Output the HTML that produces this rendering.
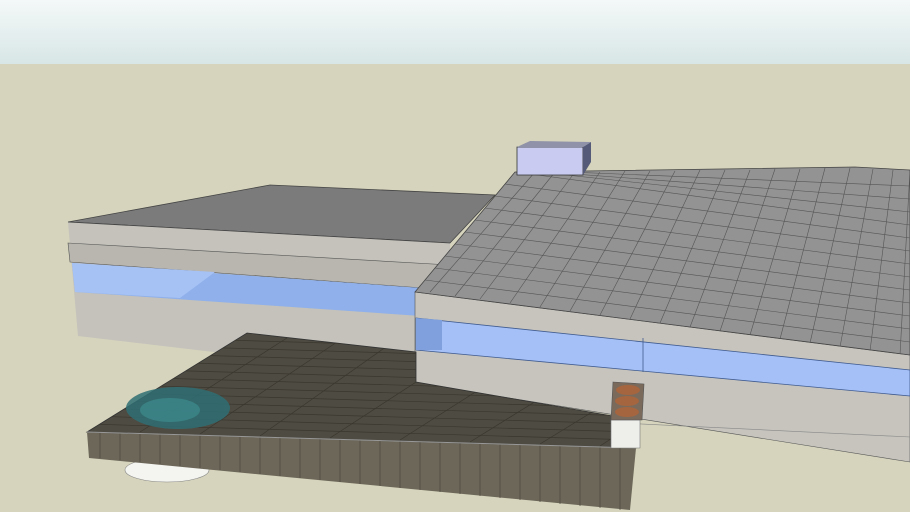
<!DOCTYPE html>
<html><head><meta charset="utf-8"><style>html,body{margin:0;padding:0;width:910px;height:512px;overflow:hidden}svg{display:block}</style></head>
<body>
<svg width="910" height="512" viewBox="0 0 910 512" xmlns="http://www.w3.org/2000/svg">
<defs>
<linearGradient id="sky" x1="0" y1="0" x2="0" y2="1"><stop offset="0" stop-color="#f4f8f8"/><stop offset="1" stop-color="#d8e6e6"/></linearGradient>
<clipPath id="rroof"><polygon points="415,292 515,172 855,167 910,170 910,355"/></clipPath>
<clipPath id="deck"><polygon points="87,432 247,333 416,352 416,382 636,420 636,448"/></clipPath>
</defs>
<rect width="910" height="64" fill="url(#sky)"/>
<rect y="64" width="910" height="448" fill="#d6d4bc"/>
<!-- left building -->
<polygon points="68,222 270,185 495,195 450,243" fill="#7b7b7b" stroke="#444" stroke-width="0.8"/>
<polygon points="68,222 450,243 450,380 78,336" fill="#c4c2bb"/>
<polygon points="68,243 450,265 450,290 70,262" fill="#b8b6ae" stroke="#555" stroke-width="0.6"/>
<polygon points="72,263 450,290 450,318 75,292" fill="#8fb0ea"/>
<polygon points="72,263 215,272 180,298 75,292" fill="#a6c2f5"/>
<line x1="68" y1="222" x2="450" y2="243" stroke="#444" stroke-width="0.8"/>
<!-- right building front -->
<polygon points="415,292 910,355 910,462 415,383" fill="#c6c4bd" stroke="#555" stroke-width="0.6"/>
<polygon points="416,318 910,370 910,396 416,350" fill="#a4c0f6" stroke="#3f5a8e" stroke-width="0.8"/>
<polygon points="416,318 442,320 442,350 416,350" fill="#7fa0dc"/>
<line x1="643" y1="338" x2="643" y2="372" stroke="#3f5a8e" stroke-width="0.8"/>
<line x1="416" y1="413" x2="910" y2="437" stroke="#888" stroke-width="0.6"/>
<!-- right roof -->
<polygon points="415,292 515,172 855,167 910,170 910,355" fill="#939393" stroke="#444" stroke-width="0.8"/>
<g clip-path="url(#rroof)" stroke="#555" stroke-width="0.6" fill="none">
<path d="M430,292L535,172M455,296L555,172M480,299L575,172M510,303L600,172M540,307L625,171M570,311L650,171M600,315L675,171M630,319L700,170M660,323L725,170M690,327L750,170M720,331L775,169M750,335L800,169M780,339L825,168M810,343L850,168M840,347L873,169M870,351L893,170M900,355L910,170"/>
<path d="M425,280L910,342M435,268L910,329M445,256L910,316M455,244L910,303M465,232L910,290M475,220L910,277M485,208L910,264M495,196L910,251M505,184L910,238M515,172L910,225M520,170L910,212M520,170L910,199M520,170L910,186"/>
</g>
<!-- chimney -->
<polygon points="517,147 583,147 583,175 517,175" fill="#c9ccf0" stroke="#333" stroke-width="0.8"/>
<polygon points="583,147 591,142 591,162 583,175" fill="#555a78"/>
<polygon points="517,147 530,141 591,142 583,147" fill="#8f92a8"/>
<!-- deck -->
<ellipse cx="167" cy="470" rx="42" ry="12" fill="#f4f4f0" stroke="#888" stroke-width="0.6"/>
<polygon points="87,432 636,448 630,510 89,458" fill="#6c6759"/>
<g stroke="#4a463c" stroke-width="0.7">
<path d="M100,432V458M120,433V460M140,433V462M160,434V464M180,434V466M200,435V468M220,436V470M240,436V472M260,437V474M280,437V476M300,438V478M320,438V480M340,439V482M360,440V484M380,440V486M400,441V488M420,442V490M440,442V492M460,443V494M480,443V496M500,444V498M520,444V500M540,445V502M560,446V504M580,446V506M600,447V508M620,447V510"/>
</g>
<polygon points="87,432 247,333 416,352 416,382 636,420 636,448" fill="#4e4b42" stroke="#333" stroke-width="0.8"/>
<g clip-path="url(#deck)" stroke="#3a372f" stroke-width="0.7" fill="none">
<path d="M87,424L636,440M87,416L636,432M87,408L636,424M87,400L636,416M87,392L636,408M87,384L636,400M87,376L636,392M87,368L636,384M87,360L636,376M87,352L636,368M87,344L636,360M87,336L636,352"/>
<path d="M140,432L290,336M200,434L340,340M260,436L390,344M330,438L450,360M400,440L510,370M470,442L570,380M540,444L620,395M600,446L640,420"/>
</g>
<ellipse cx="178" cy="408" rx="52" ry="21" fill="#2f6f73" opacity="0.85"/>
<ellipse cx="170" cy="410" rx="30" ry="12" fill="#3d8c8e" opacity="0.7"/>
<line x1="87" y1="432" x2="636" y2="448" stroke="#999" stroke-width="1"/>
<!-- planter -->
<polygon points="611,420 640,420 640,448 611,448" fill="#eeeeea" stroke="#777" stroke-width="0.6"/>
<polygon points="613,382 644,384 642,420 611,420" fill="#7a6a5c" stroke="#555" stroke-width="0.6"/>
<ellipse cx="628" cy="390" rx="12" ry="5" fill="#a4653f"/>
<ellipse cx="627" cy="401" rx="12" ry="5" fill="#a4653f"/>
<ellipse cx="627" cy="412" rx="12" ry="5" fill="#a4653f"/>
</svg>
</body></html>
